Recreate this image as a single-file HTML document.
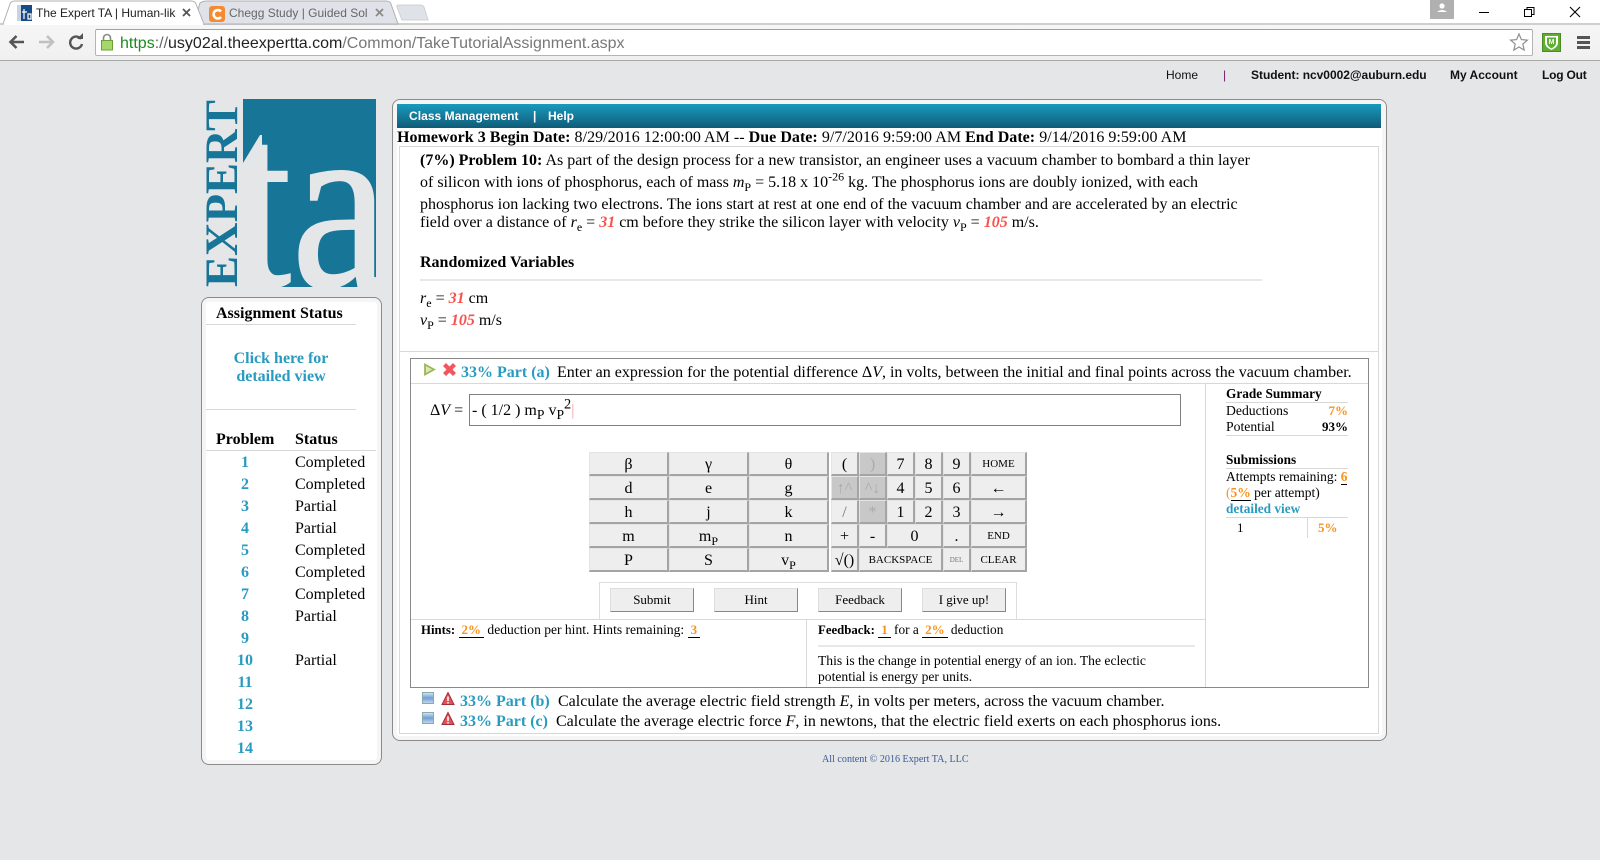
<!DOCTYPE html>
<html><head><meta charset="utf-8"><title>The Expert TA</title>
<style>
html,body{margin:0;padding:0;width:1600px;height:860px;overflow:hidden;background:#e4e6e8}
body{position:relative;font-family:"Liberation Serif",serif;color:#000;font-size:16px}
.a{position:absolute;white-space:nowrap;line-height:18px}
.b{position:absolute}
.s{font-family:"Liberation Sans",sans-serif}
sub,sup{line-height:0;font-size:75%}
.o{color:#f7931e;font-weight:bold}
.r{color:#f9524e;font-weight:bold;font-style:italic}
.l{color:#2a9bc0;font-weight:bold}
.u{display:inline-block;border-bottom:1px solid #000;padding:0 3px;line-height:14px}
.k{position:absolute;box-sizing:border-box;background:#eee;border:1px solid #e4e4e4;border-right:2px solid #a4a4a4;border-bottom:2px solid #a4a4a4;text-align:center;height:24px;line-height:23px;font-size:16px;white-space:nowrap}
.k.d{background:#c8c8c8;color:#aaa}
.k.m{font-size:11px}
.btn{position:absolute;box-sizing:border-box;top:588px;width:84px;height:24px;background:#eee;border:1px solid #ddd;border-right:1px solid #888;border-bottom:1px solid #888;text-align:center;font-size:13px;line-height:22px}
.h{position:absolute;background:#d8d8d8;height:1px}
.v{position:absolute;background:#d8d8d8;width:1px}
.n{left:225px;width:40px;text-align:center}
.st{left:295px}
</style></head><body>

<!-- browser chrome -->
<div class="b" style="left:0;top:0;width:1600px;height:24px;background:#fff"></div>
<div class="b" style="left:0;top:23px;width:1600px;height:2px;background:#cfcfcf"></div>
<div class="b" style="left:0;top:25px;width:1600px;height:35px;background:linear-gradient(#f6f6f6,#f0f0f0)"></div>
<div class="b" style="left:0;top:60px;width:1600px;height:1px;background:#a8a8a8"></div>
<svg class="b" style="left:0;top:0" width="440" height="26" viewBox="0 0 440 26">
<path d="M398 24 L391 4 Q390 1 386 1 H207 Q203 1 200 3 L198 10 L203 24Z" fill="#dfe2e8" stroke="#b0b0b0"/>
<path d="M3 24 L10 4 Q11 1 15 1 H191 Q195 1 196 4 L204 24" fill="#fff" stroke="#b0b0b0"/>
<rect x="4" y="23" width="199" height="2" fill="#fff"/>
<path d="M428 20 L424 7 Q423 5 420 5 H399 Q396 5 397 7 L402 20Z" fill="#dfe2e8" stroke="#d0d0d0"/>
<rect x="17" y="5" width="15" height="16" fill="#174a86"/>
<rect x="17" y="5" width="4" height="16" fill="#c8d4e4"/>
<path d="M24 9v10M22 12h5M28 14h3v5h-3z" stroke="#fff" fill="none" stroke-width="1.2"/>
<rect x="209" y="6" width="16" height="16" rx="3" fill="#f58a2e"/>
<path d="M221 11.5 A4.2 4.2 0 1 0 221 17" stroke="#fff" stroke-width="2.6" fill="none"/>
<path d="M183 9l7 7M190 9l-7 7" stroke="#555" stroke-width="1.8"/>
<path d="M376 9l7 7M383 9l-7 7" stroke="#8a8a8a" stroke-width="1.8"/>
</svg>
<div class="a s" style="left:36px;top:4px;font-size:12px;color:#222;width:140px;overflow:hidden">The Expert TA | Human-like</div>
<div class="a s" style="left:229px;top:4px;font-size:12px;color:#666;width:139px;overflow:hidden">Chegg Study | Guided Solutions</div>

<svg class="b" style="left:0;top:28px" width="100" height="30" viewBox="0 0 100 30">
<path d="M24 14H11M16.500 8l-6 6 6 6" stroke="#555" stroke-width="2.600" fill="none"/>
<path d="M39 14h13M47 8l6 6-6 6" stroke="#c0c0c0" stroke-width="2.600" fill="none"/>
<path d="M81 11a6 6 0 1 0 1 5" stroke="#555" stroke-width="2.400" fill="none"/><path d="M77 11h6V5z" fill="#555"/>
</svg>
<div class="b" style="left:95px;top:29px;width:1436px;height:25px;background:#fff;border:1px solid #b4b4b4;border-top-color:#a0a0a0;border-radius:2px"></div>
<svg class="b" style="left:100px;top:33px" width="14" height="18" viewBox="0 0 14 18">
<path d="M3.500 8V5a3.500 3.500 0 0 1 7 0v3" stroke="#888" stroke-width="1.600" fill="none"/>
<rect x="1.500" y="7.500" width="11" height="9.500" fill="#a5d86a" stroke="#6f9f3a"/></svg>
<div class="a s" style="left:120px;top:35px;font-size:16px"><span style="color:#1c8a1c">https</span><span style="color:#666">://</span><span style="color:#222">usy02al.theexpertta.com</span><span style="color:#777">/Common/TakeTutorialAssignment.aspx</span></div>
<svg class="b" style="left:1509px;top:32px" width="20" height="20" viewBox="0 0 20 20"><path d="M10 2l2.400 5.600 6 .5-4.600 4 1.400 6L10 15l-5.200 3.100 1.400-6-4.600-4 6-.5z" fill="#fff" stroke="#909090" stroke-width="1.200"/></svg>
<svg class="b" style="left:1542px;top:33px" width="19" height="19" viewBox="0 0 19 19"><rect x=".5" y=".5" width="18" height="18" fill="#5fae2f" stroke="#4a8c24"/><path d="M3 3h13v7q0 4-6.500 7Q3 14 3 10z" fill="#fff"/><path d="M5 4.500h9v5.500q0 3-4.500 5.500Q5 13 5 10z" fill="#5fae2f"/><text x="9.500" y="11" font-size="7" font-weight="bold" fill="#fff" text-anchor="middle" font-family="Liberation Sans">M</text></svg>
<svg class="b" style="left:1577px;top:35px" width="14" height="14"><rect width="13" height="3" y="1" fill="#555"/><rect width="13" height="3" y="6" fill="#555"/><rect width="13" height="3" y="11" fill="#555"/></svg>

<div class="b" style="left:1430px;top:0;width:24px;height:19px;background:#b0b0b0"></div>
<svg class="b" style="left:1430px;top:0" width="170" height="20" viewBox="0 0 170 20">
<circle cx="12" cy="6" r="2.600" fill="#fff"/><path d="M7 12q5-4 10 0z" fill="#fff"/>
<path d="M49 12.500h10" stroke="#000"/>
<path d="M94.500 9.500h7v7h-7zM97 9V7.500h7v7h-2.500" fill="none" stroke="#000"/>
<path d="M140 7l10 10M150 7l-10 10" stroke="#000" stroke-width="1.100"/>
</svg>

<!-- top nav -->
<div class="a s" style="left:1166px;top:66px;font-size:12px;color:#111">Home</div>
<div class="a s" style="left:1223px;top:66px;font-size:12px;color:#7a1a6a">|</div>
<div class="a s" style="left:1251px;top:66px;font-size:12px;font-weight:bold;color:#111;letter-spacing:-.03px">Student: ncv0002@auburn.edu</div>
<div class="a s" style="left:1450px;top:66px;font-size:12px;font-weight:bold;color:#111">My Account</div>
<div class="a s" style="left:1542px;top:66px;font-size:12px;font-weight:bold;color:#111;letter-spacing:-.2px">Log Out</div>

<!-- logo -->
<svg class="b" style="left:200px;top:95px" width="180" height="195" viewBox="0 0 180 195">
<rect x="43" y="4" width="133" height="188" fill="#177598"/>
<text transform="translate(37 192) rotate(-90)" font-family="Liberation Serif" font-weight="bold" font-size="47" fill="#177598" textLength="187" lengthAdjust="spacingAndGlyphs">EXPERT</text>
<svg x="43" y="4" width="133" height="188" viewBox="0 0 133 188">
<polygon points="0,64 17,36 19,36 19,176 26,188 0,188" fill="#e4e6e8"/>
<text transform="translate(-5 187) scale(.77 1)" font-family="Liberation Serif" font-size="250" fill="#e4e6e8" stroke="#e4e6e8" stroke-width="1">t</text>
<text transform="translate(48.600 187) scale(.894 1)" font-family="Liberation Serif" font-size="245" fill="#e4e6e8" stroke="#e4e6e8" stroke-width="2">a</text>
</svg>
</svg>

<!-- left panel -->
<div class="b" style="box-sizing:border-box;left:201px;top:297px;width:181px;height:468px;background:#fff;border:1px solid #8a8a8a;border-radius:8px;box-shadow:inset 0 0 0 4px #f5f5f5"></div>
<div class="a" style="left:216px;top:305px;font-weight:bold">Assignment Status</div>
<div class="h" style="left:206px;top:324px;width:150px"></div>
<div class="a l" style="left:206px;top:350px;width:150px;text-align:center">Click here for</div>
<div class="a l" style="left:206px;top:368px;width:150px;text-align:center">detailed view</div>
<div class="h" style="left:206px;top:409px;width:150px"></div>
<div class="a" style="left:216px;top:431px;font-weight:bold">Problem</div>
<div class="a" style="left:295px;top:431px;font-weight:bold">Status</div>
<div class="h" style="left:206px;top:450px;width:170px"></div>
<div class="a l n" style="top:454px">1</div><div class="a st" style="top:454px">Completed</div>
<div class="a l n" style="top:476px">2</div><div class="a st" style="top:476px">Completed</div>
<div class="a l n" style="top:498px">3</div><div class="a st" style="top:498px">Partial</div>
<div class="a l n" style="top:520px">4</div><div class="a st" style="top:520px">Partial</div>
<div class="a l n" style="top:542px">5</div><div class="a st" style="top:542px">Completed</div>
<div class="a l n" style="top:564px">6</div><div class="a st" style="top:564px">Completed</div>
<div class="a l n" style="top:586px">7</div><div class="a st" style="top:586px">Completed</div>
<div class="a l n" style="top:608px">8</div><div class="a st" style="top:608px">Partial</div>
<div class="a l n" style="top:630px">9</div>
<div class="a l n" style="top:652px">10</div><div class="a st" style="top:652px">Partial</div>
<div class="a l n" style="top:674px">11</div>
<div class="a l n" style="top:696px">12</div>
<div class="a l n" style="top:718px">13</div>
<div class="a l n" style="top:740px">14</div>

<!-- main panel -->
<div class="b" style="box-sizing:border-box;left:392px;top:99px;width:995px;height:642px;background:#fff;border:1px solid #8a8a8a;border-radius:8px;box-shadow:inset 0 0 0 4px #f5f5f5"></div>
<div class="b" style="left:397px;top:104px;width:984px;height:24px;background:linear-gradient(#1a9abf,#0f5b76)"></div>
<div class="a s" style="left:409px;top:107px;font-size:12px;font-weight:bold;color:#fff;letter-spacing:.05px">Class Management</div>
<div class="a s" style="left:533px;top:107px;font-size:12px;font-weight:bold;color:#fff">|</div>
<div class="a s" style="left:548px;top:107px;font-size:12px;font-weight:bold;color:#fff">Help</div>
<div class="a" style="left:397px;top:129px;letter-spacing:.03px"><b>Homework 3 Begin Date:</b> 8/29/2016 12:00:00 AM -- <b>Due Date:</b> 9/7/2016 9:59:00 AM <b>End Date:</b> 9/14/2016 9:59:00 AM</div>
<div class="b" style="box-sizing:border-box;left:399px;top:146px;width:980px;height:588px;border:1px solid #d8d8d8"></div>

<div class="a" style="left:420px;top:152px"><b>(7%) Problem 10:</b> As part of the design process for a new transistor, an engineer uses a vacuum chamber to bombard a thin layer</div>
<div class="a" style="left:420px;top:174px">of silicon with ions of phosphorus, each of mass <i>m</i><sub>P</sub> = 5.18 x 10<sup>-26</sup> kg. The phosphorus ions are doubly ionized, with each</div>
<div class="a" style="left:420px;top:196px">phosphorus ion lacking two electrons. The ions start at rest at one end of the vacuum chamber and are accelerated by an electric</div>
<div class="a" style="left:420px;top:214px">field over a distance of <i>r</i><sub>e</sub> = <span class="r">31</span> cm before they strike the silicon layer with velocity <i>v</i><sub>P</sub> = <span class="r">105</span> m/s.</div>
<div class="a" style="left:420px;top:254px;font-weight:bold">Randomized Variables</div>
<div class="b" style="left:420px;top:279px;width:842px;height:2px;background:#e8e8e8"></div>
<div class="a" style="left:420px;top:290px"><i>r</i><sub>e</sub> = <span class="r">31</span> cm</div>
<div class="a" style="left:420px;top:312px"><i>v</i><sub>P</sub> = <span class="r">105</span> m/s</div>
<div class="h" style="left:399px;top:351px;width:980px"></div>

<!-- part a -->
<div class="b" style="box-sizing:border-box;left:410px;top:358px;width:959px;height:330px;border:1px solid #888"></div>
<div class="h" style="left:411px;top:383px;width:957px"></div>
<svg class="b" style="left:423px;top:362px" width="36" height="16" viewBox="0 0 36 16">
<path d="M2 2.500l9 5-9 5z" fill="#dbe8b4" stroke="#9ab85a" stroke-width="1.800"/>
<path d="M23 1l3.500 3.500L30 1l3 3-3.500 3.500L33 11l-3 3-3.500-3.500L23 14l-3-3 3.500-3.500L20 4z" fill="#f0565e"/>
</svg>
<div class="a l" style="left:461px;top:364px">33% Part (a)</div>
<div class="a" style="left:557px;top:364px">Enter an expression for the potential difference Δ<i>V</i>, in volts, between the initial and final points across the vacuum chamber.</div>
<div class="a" style="left:430px;top:402px">Δ<i>V</i> =</div>
<div class="b" style="box-sizing:border-box;left:469px;top:394px;width:712px;height:32px;border:1px solid #808080;background:#fff"></div>
<div class="a" style="left:472px;top:402px">- ( 1/2 ) m<sub style="font-size:85%">P</sub> v<sub style="font-size:85%">P</sub><sup style="font-size:90%">2</sup><span style="color:#f0a0a0;font-weight:normal">|</span></div>

<!-- keypad -->
<div class="k" style="left:589px;top:452px;width:80px">β</div><div class="k" style="left:669px;top:452px;width:80px">γ</div><div class="k" style="left:749px;top:452px;width:80px">θ</div>
<div class="k" style="left:589px;top:476px;width:80px">d</div><div class="k" style="left:669px;top:476px;width:80px">e</div><div class="k" style="left:749px;top:476px;width:80px">g</div>
<div class="k" style="left:589px;top:500px;width:80px">h</div><div class="k" style="left:669px;top:500px;width:80px">j</div><div class="k" style="left:749px;top:500px;width:80px">k</div>
<div class="k" style="left:589px;top:524px;width:80px">m</div><div class="k" style="left:669px;top:524px;width:80px">m<sub>P</sub></div><div class="k" style="left:749px;top:524px;width:80px">n</div>
<div class="k" style="left:589px;top:548px;width:80px">P</div><div class="k" style="left:669px;top:548px;width:80px">S</div><div class="k" style="left:749px;top:548px;width:80px">v<sub>P</sub></div>

<div class="k" style="left:831px;top:452px;width:28px">(</div><div class="k d" style="left:859px;top:452px;width:28px">)</div><div class="k" style="left:887px;top:452px;width:28px">7</div><div class="k" style="left:915px;top:452px;width:28px">8</div><div class="k" style="left:943px;top:452px;width:28px">9</div><div class="k m" style="left:971px;top:452px;width:56px">HOME</div>
<div class="k d" style="left:831px;top:476px;width:28px">↑^</div><div class="k d" style="left:859px;top:476px;width:28px">^↓</div><div class="k" style="left:887px;top:476px;width:28px">4</div><div class="k" style="left:915px;top:476px;width:28px">5</div><div class="k" style="left:943px;top:476px;width:28px">6</div><div class="k" style="left:971px;top:476px;width:56px">←</div>
<div class="k" style="left:831px;top:500px;width:28px;color:#777">/</div><div class="k d" style="left:859px;top:500px;width:28px">*</div><div class="k" style="left:887px;top:500px;width:28px">1</div><div class="k" style="left:915px;top:500px;width:28px">2</div><div class="k" style="left:943px;top:500px;width:28px">3</div><div class="k" style="left:971px;top:500px;width:56px">→</div>
<div class="k" style="left:831px;top:524px;width:28px">+</div><div class="k" style="left:859px;top:524px;width:28px">-</div><div class="k" style="left:887px;top:524px;width:56px">0</div><div class="k" style="left:943px;top:524px;width:28px">.</div><div class="k m" style="left:971px;top:524px;width:56px">END</div>
<div class="k" style="left:831px;top:548px;width:28px">√()</div><div class="k m" style="left:859px;top:548px;width:84px">BACKSPACE</div><div class="k" style="left:943px;top:548px;width:28px;font-size:7px;color:#777">DEL</div><div class="k m" style="left:971px;top:548px;width:56px">CLEAR</div>

<div class="b" style="box-sizing:border-box;left:599px;top:582px;width:418px;height:37px;border:1px solid #ddd;border-bottom:0"></div>
<div class="btn" style="left:610px">Submit</div><div class="btn" style="left:714px">Hint</div><div class="btn" style="left:818px">Feedback</div><div class="btn" style="left:922px">I give up!</div>

<div class="h" style="left:411px;top:619px;width:794px"></div>
<div class="v" style="left:806px;top:619px;height:68px"></div>
<div class="v" style="left:1205px;top:383px;height:304px"></div>

<div class="a" style="left:421px;top:621px;font-size:13.550px"><b style="font-size:12.800px">Hints:</b> <span class="u o" style="font-size:13px">2%</span> deduction per hint. Hints remaining: <span class="u o" style="font-size:13px">3</span></div>
<div class="a" style="left:818px;top:621px;font-size:13.300px"><b style="font-size:12.800px">Feedback:</b> <span class="u o" style="font-size:13px">1</span> for a <span class="u o" style="font-size:13px">2%</span> deduction</div>
<div class="b" style="left:818px;top:645px;width:377px;height:2px;background:#e8e8e8"></div>
<div class="a" style="left:818px;top:652px;font-size:13.600px">This is the change in potential energy of an ion. The eclectic</div>
<div class="a" style="left:818px;top:668px;font-size:13.600px">potential is energy per units.</div>

<!-- right column -->
<div class="a" style="left:1226px;top:385px;font-size:13.300px;font-weight:bold">Grade Summary</div>
<div class="h" style="left:1226px;top:402px;width:122px"></div>
<div class="a" style="left:1226px;top:402px;font-size:13.700px">Deductions</div>
<div class="a o" style="left:1298px;top:402px;width:50px;text-align:right;font-size:13px">7%</div>
<div class="a" style="left:1226px;top:418px;font-size:13.700px">Potential</div>
<div class="a" style="left:1298px;top:418px;width:50px;text-align:right;font-size:13px;font-weight:bold">93%</div>
<div class="h" style="left:1226px;top:435px;width:122px"></div>
<div class="a" style="left:1226px;top:451px;font-size:13.300px;font-weight:bold">Submissions</div>
<div class="h" style="left:1226px;top:468px;width:122px"></div>
<div class="a" style="left:1226px;top:468px;font-size:13.500px">Attempts remaining: <span class="o" style="border-bottom:1px solid #000">6</span></div>
<div class="a" style="left:1226px;top:484px;font-size:13.500px"><span style="color:#f7931e">(</span><span class="o" style="border-bottom:1px solid #000">5%</span> per attempt)</div>
<div class="a l" style="left:1226px;top:500px;font-size:13.300px">detailed view</div>
<div class="h" style="left:1226px;top:517px;width:122px"></div>
<div class="v" style="left:1307px;top:517px;height:21px"></div>
<div class="a" style="left:1237px;top:519px;font-size:13px">1</div>
<div class="a o" style="left:1318px;top:519px;font-size:13px">5%</div>

<!-- parts b, c -->
<svg class="b" style="left:422px;top:692px" width="34" height="36" viewBox="0 0 34 36">
<defs><linearGradient id="g" x1="0" y1="0" x2="0" y2="1"><stop offset="0" stop-color="#dbe8f5"/><stop offset=".5" stop-color="#6f9ed4"/><stop offset="1" stop-color="#c8daf0"/></linearGradient></defs>
<rect x=".5" y=".5" width="11" height="11" fill="url(#g)" stroke="#8aa"/><rect x=".5" y="20.500" width="11" height="11" fill="url(#g)" stroke="#8aa"/>
<path d="M26 0.500l6 12H20z" fill="#e8505a" stroke="#a03038"/><path d="M26 4.500v4.500M26 10v1.500" stroke="#fff" stroke-width="1.500"/>
<path d="M26 20.500l6 12H20z" fill="#e8505a" stroke="#a03038"/><path d="M26 24.500v4.500M26 30v1.500" stroke="#fff" stroke-width="1.500"/>
</svg>
<div class="a l" style="left:460px;top:693px">33% Part (b)</div>
<div class="a" style="left:558px;top:693px">Calculate the average electric field strength <i>E</i>, in volts per meters, across the vacuum chamber.</div>
<div class="a l" style="left:460px;top:713px">33% Part (c)</div>
<div class="a" style="left:556px;top:713px">Calculate the average electric force <i>F</i>, in newtons, that the electric field exerts on each phosphorus ions.</div>

<div class="a" style="left:822px;top:751px;font-size:10.100px;color:#3a5a96">All content © 2016 Expert TA, LLC</div>
</body></html>
